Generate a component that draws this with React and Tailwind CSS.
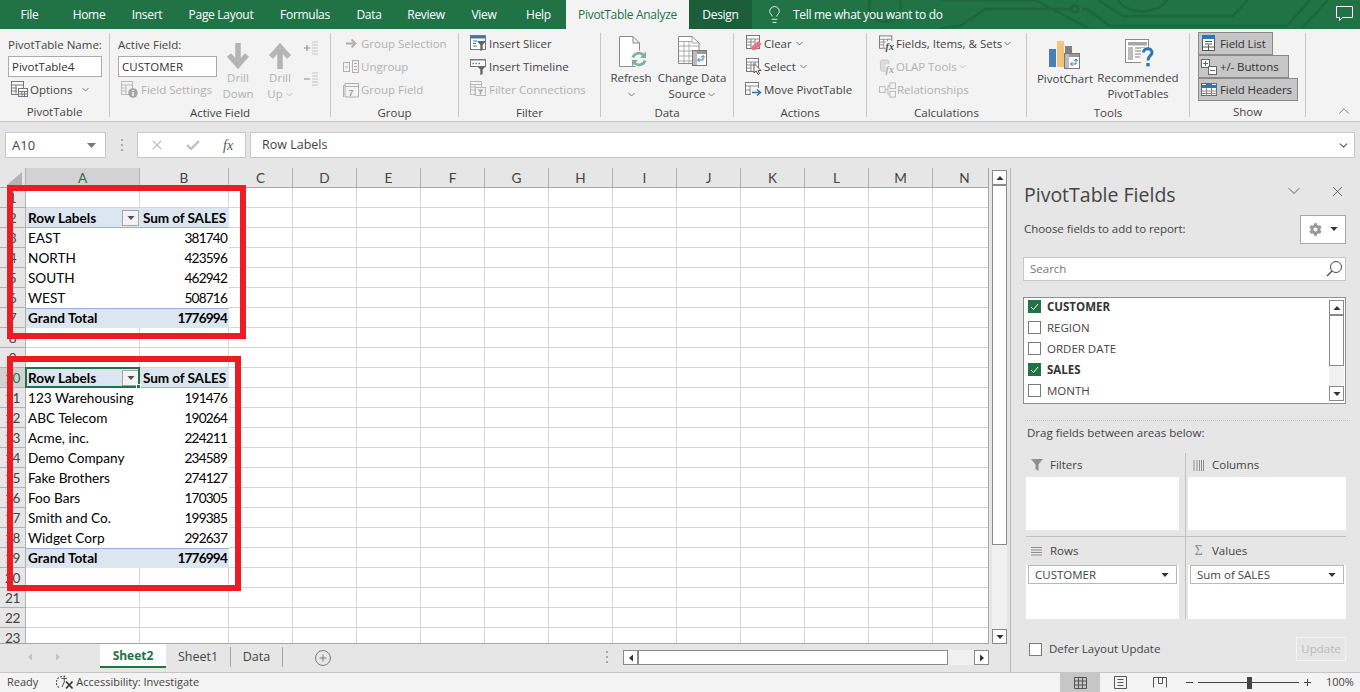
import { ChevronDown, ChevronUp, CirclePlus, Lightbulb, X } from 'lucide-react';
import { FaCog } from 'react-icons/fa';

const ui = "font-['Open_Sans','Noto_Sans',sans-serif]";
const cellFont = "font-['Lato','Liberation_Sans',sans-serif]";

const tabs = [
  ['File', 'w-[59px]'],
  ['Home', 'w-[60px]'],
  ['Insert', 'w-[56px]'],
  ['Page Layout', 'w-[92px]'],
  ['Formulas', 'w-[76px]'],
  ['Data', 'w-[52px]'],
  ['Review', 'w-[62px]'],
  ['View', 'w-[54px]'],
  ['Help', 'w-[55px]'],
];

function Caret({ className = '' }) {
  return (
    <svg width="7" height="5" viewBox="0 0 7 5" className={className}>
      <path d="M.5 1 3.5 4 6.5 1" fill="none" stroke="currentColor" />
    </svg>
  );
}

function Tri({ className = 'text-[#333]', w = 9, h = 5 }) {
  return (
    <svg width={w} height={h} viewBox="0 0 9 5" className={className}>
      <path d="M0 0H9L4.5 5Z" fill="currentColor" />
    </svg>
  );
}

function TableIcon({ c = '#777', small = '#777' }) {
  return (
    <svg width="17" height="17" viewBox="0 0 17 17">
      <rect x=".5" y=".5" width="12" height="13" fill="#fff" stroke={c} />
      <path d="M1 4H12M5 4V13M1 7H6M1 10H6" stroke={c} fill="none" />
      <rect x="7.5" y="7.5" width="9" height="8" fill="#fff" stroke={small} />
      <path d="M8 10.5H16M8 13H16M11 10V15M13.5 10V15" stroke={small} />
    </svg>
  );
}

function FieldSettingsIcon() {
  return (
    <svg width="17" height="17" viewBox="0 0 17 17">
      <rect x=".5" y=".5" width="11" height="13" fill="#f3f3f3" stroke="#bbb" />
      <path d="M1 4H11M5 4V13M1 7H5M1 10H5" stroke="#bbb" />
      <circle cx="12" cy="12" r="4.8" fill="#a6a6a6" />
      <path d="M12 11V15M12 9V10" stroke="#fff" strokeWidth="1.4" />
    </svg>
  );
}

function DrillDown() {
  return (
    <svg width="24" height="26" viewBox="0 0 24 26">
      <path d="M12 0V22M3 12 12 22 21 12" fill="none" stroke="#b4b4b4" strokeWidth="5.5" />
    </svg>
  );
}

function DrillUp() {
  return (
    <svg width="24" height="26" viewBox="0 0 24 26">
      <path d="M12 26V4M3 14 12 4 21 14" fill="none" stroke="#b4b4b4" strokeWidth="5.5" />
    </svg>
  );
}

function Expand({ minus }) {
  return (
    <svg width="16" height="15" viewBox="0 0 16 15">
      <path d="M9 1H15M9 4H15M9 7H15M9 10H15M9 13H15" stroke="#c4c4c4" />
      <path d={minus ? 'M1 7H7' : 'M1 7H7M4 4V10'} stroke="#a8a8a8" strokeWidth="1.4" />
    </svg>
  );
}

function GroupIcon({ kind }) {
  if (kind === 'sel') {
    return (
      <svg width="17" height="15" viewBox="0 0 17 15">
        <path d="M3 7.5H12M8.5 3.5 12.5 7.5 8.5 11.5" fill="none" stroke="#b0b0b0" strokeWidth="2" />
      </svg>
    );
  }
  if (kind === 'un') {
    return (
      <svg width="17" height="15" viewBox="0 0 17 15">
        <rect x=".5" y="3.5" width="6" height="9" fill="none" stroke="#b0b0b0" />
        <rect x="9.5" y="1.5" width="6" height="12" fill="none" stroke="#b0b0b0" />
        <path d="M11 4.5H14M11 7.5H14M11 10.5H14M2 8H5" stroke="#b0b0b0" />
      </svg>
    );
  }
  return (
    <svg width="17" height="16" viewBox="0 0 17 16">
      <path d="M.5 15V3.5H2M2 1.5H15.5V15H2Z" fill="none" stroke="#b0b0b0" />
      <path d="M2 4.5H15" stroke="#b0b0b0" />
      <text x="5.5" y="13.5" fontSize="9" fontWeight="700" fill="#a0a0a0" fontFamily="Liberation Sans">7</text>
    </svg>
  );
}

function SlicerIcon() {
  return (
    <svg width="17" height="17" viewBox="0 0 17 17">
      <rect x=".5" y=".5" width="15" height="14" fill="#fff" stroke="#777" />
      <rect x="1" y="1" width="14" height="2.5" fill="#3a77b4" />
      <path d="M3 6H7M3 8.5H6M3 11H7" stroke="#3a77b4" />
      <path d="M7 6H16L12.7 10V15L10.3 16V10Z" fill="#666" />
    </svg>
  );
}

function TimelineIcon() {
  return (
    <svg width="17" height="17" viewBox="0 0 17 17">
      <rect x=".5" y="1.5" width="15" height="7" fill="#fff" stroke="#777" />
      <rect x="1" y="1" width="14" height="1.5" fill="#777" />
      <path d="M2.5 5.5H4M5.5 5.5H7M8.5 5.5H10" stroke="#3a77b4" strokeWidth="1.5" />
      <path d="M7 8H16L12.7 11.5V16L10.3 17V11.5Z" fill="#666" />
    </svg>
  );
}

function FilterConnIcon() {
  return (
    <svg width="17" height="17" viewBox="0 0 17 17">
      <rect x=".5" y=".5" width="11" height="13" fill="none" stroke="#bbb" />
      <path d="M1 3.5H11M1 6H5M1 9H5M5 4V13" stroke="#bbb" />
      <rect x="5.5" y="6.5" width="10" height="8" fill="#f3f3f3" stroke="#bbb" />
      <path d="M7.5 8.5H13.5L11.2 11V13.5L9.8 13.5V11Z" fill="#a8a8a8" />
    </svg>
  );
}

function RefreshIcon() {
  return (
    <svg width="30" height="34" viewBox="0 0 30 34" className="ml-[4px]">
      <path d="M1.5 1.5H15L21.5 8V31.5H1.5ZM15 1.5V8H21.5" fill="#fff" stroke="#8a8a8a" />
      <circle cx="21" cy="24" r="8.5" fill="#f3f3f3" />
      <path d="M14.8 22.5A6.5 6.5 0 0 1 26 20.5M27.2 25.5A6.5 6.5 0 0 1 16 27.5" fill="none" stroke="#7fb09b" strokeWidth="2.6" />
      <path d="M28 16.5V23H22ZM14 31.5V25H20Z" fill="#7fb09b" />
    </svg>
  );
}

function ChangeSourceIcon() {
  return (
    <svg width="30" height="34" viewBox="0 0 30 34">
      <path d="M1.5 1.5H15L22 8V28.5H1.5Z" fill="#fff" stroke="#8a8a8a" />
      <path d="M15 1.5V8H22M2 6.5H15M2 11H22M2 16H15M2 21H15M2 26H15M7 6V28M12 6V28" fill="none" stroke="#aaa" />
      <rect x="15.5" y="15.5" width="14" height="15" fill="#fff" stroke="#777" />
      <rect x="16" y="16" width="13" height="3" fill="#999" />
      <rect x="16" y="16" width="4" height="14" fill="#bbb" />
      <path d="M26 21V25H21M22.5 23 20.5 25 22.5 27M24 22.5 26 20.5 28 22.5" fill="none" stroke="#2e75b6" />
    </svg>
  );
}

function ClearIcon() {
  return (
    <svg width="16" height="17" viewBox="0 0 16 17">
      <rect x=".5" y=".5" width="13" height="13" fill="#fff" stroke="#777" />
      <path d="M1 4H13M5 4V13M9 4V9M1 7H9M1 10H5" stroke="#888" />
      <path d="M9 8.5 12.5 6 15.5 9 10 15 6 15 5 12Z" fill="#e8748a" />
    </svg>
  );
}

function SelectIcon() {
  return (
    <svg width="16" height="17" viewBox="0 0 16 17">
      <rect x=".5" y=".5" width="12" height="13" fill="#fff" stroke="#777" />
      <path d="M1 4H12M5 4V13M9 4V8M1 7H8M1 10H5" stroke="#888" />
      <path d="M8 5.5V15L10.2 13 12 16.5 13.5 15.7 12 12.5H15Z" fill="#fff" stroke="#555" />
    </svg>
  );
}

function MoveIcon() {
  return (
    <svg width="17" height="16" viewBox="0 0 17 16">
      <rect x=".5" y=".5" width="13" height="12" fill="#fff" stroke="#777" />
      <path d="M1 4H13M5 4V12M1 8H5" stroke="#888" />
      <rect x="6" y="6" width="8" height="8" fill="#f3f3f3" />
      <path d="M7 10.5H15M12 7.5 15.5 10.5 12 13.5" fill="none" stroke="#2e75b6" strokeWidth="1.5" />
    </svg>
  );
}

function FxGrid({ disabled }) {
  const c = disabled ? '#bbb' : '#777';
  return (
    <svg width="18" height="17" viewBox="0 0 18 17">
      {disabled ? (
        <path d="M1.5 3C1.5 1 10.5 1 10.5 3V12C10.5 14 1.5 14 1.5 12Z" fill="#dcdcdc" stroke="#c8c8c8" />
      ) : (
        <>
          <rect x=".5" y=".5" width="13" height="13" fill="#fff" stroke={c} />
          <path d="M1 4H13M5 4V13M9 4V8M1 7H9M1 10H5" stroke="#888" />
        </>
      )}
      <rect x="7" y="6" width="11" height="11" fill="#f3f3f3" />
      <text x="7" y="15.5" fontSize="10.5" fontStyle="italic" fontFamily="Liberation Serif" fontWeight="700" fill={disabled ? '#aaa' : '#444'}>fx</text>
    </svg>
  );
}

function RelIcon() {
  return (
    <svg width="18" height="16" viewBox="0 0 18 16">
      <rect x=".5" y="4.5" width="6" height="6" fill="none" stroke="#b8b8b8" />
      <rect x="11.5" y=".5" width="6" height="6" fill="none" stroke="#b8b8b8" />
      <rect x="11.5" y="9.5" width="6" height="6" fill="none" stroke="#b8b8b8" />
      <path d="M7 7.5H9.5V3.5H11M9.5 7.5V12.5H11" fill="none" stroke="#b8b8b8" />
    </svg>
  );
}

function PivotChartIcon() {
  return (
    <svg width="32" height="30" viewBox="0 0 32 30">
      <rect x="0" y="9" width="7" height="18" fill="#4a7fb5" />
      <rect x="8" y="1" width="7" height="26" fill="#f0c67e" />
      <rect x="16" y="6" width="7" height="7" fill="#808080" />
      <rect x="15.5" y="13.5" width="15" height="15" fill="#fff" stroke="#777" />
      <rect x="16" y="14" width="14" height="3" fill="#999" />
      <rect x="16" y="14" width="4" height="14" fill="#bbb" />
      <path d="M27 19V24H22M23.5 22 21.5 24 23.5 26M25 21 27 19 29 21" fill="none" stroke="#2e75b6" />
    </svg>
  );
}

function RecommendedIcon() {
  return (
    <svg width="29" height="30" viewBox="0 0 29 30" className="ml-[3px]">
      <rect x=".5" y=".5" width="23" height="23" fill="#fff" stroke="#8a8a8a" />
      <rect x="3" y="3" width="19" height="3.5" fill="#a6a6a6" />
      <rect x="3" y="8" width="5" height="13" fill="#bcbcbc" />
      <path d="M10 9H20M10 12H20M10 15H16M10 18H15" stroke="#a6a6a6" strokeWidth="1.5" />
      <rect x="16" y="9" width="13" height="21" fill="#f3f3f3" />
      <path d="M18.5 13.5C18.5 8.5 27 8.5 27 13.5 27 17 23 16.5 23 21.5" fill="none" stroke="#2e75b6" strokeWidth="3" />
      <rect x="21.3" y="24" width="3.4" height="3.4" fill="#2e75b6" />
    </svg>
  );
}

function FieldListIcon() {
  return (
    <svg width="14" height="17" viewBox="0 0 14 17">
      <rect x=".5" y=".5" width="12" height="15" fill="#fff" stroke="#555" />
      <rect x="0" y="0" width="13" height="4" fill="#2e75b6" />
      <path d="M3 6.5H10M3 9H10M6.5 10V15M1 12H12" stroke="#555" />
    </svg>
  );
}

function PlusMinusIcon() {
  return (
    <svg width="16" height="16" viewBox="0 0 16 16">
      <rect x=".5" y=".5" width="8" height="8" fill="#fff" stroke="#666" />
      <path d="M2 4.5H7M4.5 2V7" stroke="#2e75b6" />
      <rect x="7.5" y="7.5" width="8" height="8" fill="#fff" stroke="#666" />
      <path d="M9 11.5H14" stroke="#2e75b6" />
    </svg>
  );
}

function HeadersIcon() {
  return (
    <svg width="16" height="14" viewBox="0 0 16 14">
      <rect x=".5" y=".5" width="15" height="12" fill="#fff" stroke="#666" />
      <rect x="0" y="2" width="16" height="3" fill="#2e75b6" />
      <rect x="5" y="0" width="6" height="2" fill="#2e75b6" />
      <path d="M0 8H16M0 10.5H16M5.5 5V13M10.5 5V13" stroke="#888" />
    </svg>
  );
}

function RibbonRow({ icon, label, off, caret, gap = 'gap-[3px]' }) {
  return (
    <div className={`flex h-[23px] items-center ${gap} whitespace-nowrap ${off ? 'text-[#b1b1b1]' : 'text-[#444]'}`}>
      <span className="flex w-[17px] shrink-0 justify-center">{icon}</span>
      <span>{label}</span>
      {caret && <Caret className="ml-[2px] opacity-70" />}
    </div>
  );
}

function BigButton({ icon, lines, caret, off, w }) {
  return (
    <div className={`flex flex-col items-center ${w} ${off ? 'text-[#b1b1b1]' : 'text-[#444]'}`}>
      <div className="flex h-[38px] items-end pb-[1px]">{icon}</div>
      <div className="text-center leading-[16px] whitespace-nowrap">
        {lines.map((l, i) => (
          <div key={l || i} className="flex h-[16px] items-center justify-center gap-[3px]">
            {l}
            {caret && i === lines.length - 1 && <Caret className="opacity-70" />}
          </div>
        ))}
      </div>
    </div>
  );
}

function Group({ label, w, children, className = '' }) {
  return (
    <div className={`relative mt-[4px] flex h-[84px] shrink-0 flex-col border-r border-[#c6c6c6] ${w}`}>
      <div className={`flex h-[69px] ${className}`}>{children}</div>
      <div className="h-[22px] text-center leading-[22px] text-[#444]">{label}</div>
    </div>
  );
}

function ShowButton({ icon, label, w }) {
  return (
    <div className={`flex h-[23px] items-center gap-[3px] border border-[#8a8a8a] bg-[#c6c6c6] pl-[2px] tracking-[-0.1px] whitespace-nowrap text-[#333] ${w}`}>
      <span className="flex w-[16px] justify-center">{icon}</span>
      {label}
    </div>
  );
}

function Ribbon() {
  return (
    <div className={`flex h-[93px] shrink-0 border-b border-[#c6c6c6] bg-[#f3f3f3] text-[11.5px] ${ui}`}>
      <Group label="PivotTable" w="w-[110px]" className="flex-col pl-[8px]">
        <div className="flex h-[23px] items-center whitespace-nowrap text-[#444]">PivotTable Name:</div>
        <div className="flex h-[21px] w-[94px] items-center border border-[#ababab] bg-white pl-[3px] text-[#333]">PivotTable4</div>
        <div className="mt-[1px] flex items-center pl-[3px] text-[#444]">
          <RibbonRow icon={<TableIcon />} label="Options" gap="gap-[2px]" />
          <Caret className="ml-[10px] opacity-70" />
        </div>
      </Group>
      <Group label="Active Field" w="w-[221px]" className="pl-[8px]">
        <div className="flex w-[100px] flex-col">
          <div className="flex h-[23px] items-center text-[#444]">Active Field:</div>
          <div className="flex h-[21px] w-[99px] items-center border border-[#ababab] bg-white pl-[3px] text-[#333]">CUSTOMER</div>
          <div className="mt-[1px] ml-[3px]"><RibbonRow off icon={<FieldSettingsIcon />} label="Field Settings" /></div>
        </div>
        <BigButton off w="w-[40px]" icon={<DrillDown />} lines={['Drill', 'Down']} />
        <BigButton off w="w-[44px]" icon={<DrillUp />} lines={['Drill', 'Up']} caret />
        <div className="ml-[1px] flex flex-col gap-[16px] pt-[8px]">
          <Expand />
          <Expand minus />
        </div>
      </Group>
      <Group label="Group" w="w-[128px]" className="-mt-[1px] mb-[1px] flex-col pl-[12px]">
        <RibbonRow off icon={<GroupIcon kind="sel" />} label="Group Selection" gap="gap-[1px]" />
        <RibbonRow off icon={<GroupIcon kind="un" />} label="Ungroup" gap="gap-[1px]" />
        <RibbonRow off icon={<GroupIcon kind="field" />} label="Group Field" gap="gap-[1px]" />
      </Group>
      <Group label="Filter" w="w-[142px]" className="-mt-[1px] mb-[1px] flex-col pl-[11px]">
        <RibbonRow icon={<SlicerIcon />} label="Insert Slicer" gap="gap-[2px]" />
        <RibbonRow icon={<TimelineIcon />} label="Insert Timeline" gap="gap-[2px]" />
        <RibbonRow off icon={<FilterConnIcon />} label="Filter Connections" gap="gap-[2px]" />
      </Group>
      <Group label="Data" w="w-[133px]" className="pl-[5px]">
        <BigButton w="w-[50px]" icon={<RefreshIcon />} lines={['Refresh', '']} caret />
        <BigButton w="w-[72px]" icon={<ChangeSourceIcon />} lines={['Change Data', 'Source']} caret />
      </Group>
      <Group label="Actions" w="w-[133px]" className="-mt-[1px] mb-[1px] flex-col pl-[11px]">
        <RibbonRow icon={<ClearIcon />} label="Clear" caret gap="gap-[2px]" />
        <RibbonRow icon={<SelectIcon />} label="Select" caret gap="gap-[2px]" />
        <RibbonRow icon={<MoveIcon />} label="Move PivotTable" gap="gap-[2px]" />
      </Group>
      <Group label="Calculations" w="w-[160px]" className="-mt-[1px] mb-[1px] flex-col pl-[12px]">
        <RibbonRow icon={<FxGrid />} label="Fields, Items, & Sets" caret gap="gap-[0px]" />
        <RibbonRow off icon={<FxGrid disabled />} label="OLAP Tools" caret gap="gap-[0px]" />
        <RibbonRow off icon={<RelIcon />} label="Relationships" gap="gap-[1px]" />
      </Group>
      <Group label="Tools" w="w-[163px]" className="pl-[7px]">
        <BigButton w="w-[62px]" icon={<PivotChartIcon />} lines={['PivotChart']} />
        <BigButton w="w-[84px]" icon={<RecommendedIcon />} lines={['Recommended', 'PivotTables']} />
      </Group>
      <Group label="Show" w="w-[116px]" className="flex-col pl-[8px]">
        <div className="-mt-[1px] flex flex-col">
          <ShowButton icon={<FieldListIcon />} label="Field List" w="w-[75px]" />
          <ShowButton icon={<PlusMinusIcon />} label="+/- Buttons" w="w-[91px]" />
          <ShowButton icon={<HeadersIcon />} label="Field Headers" w="w-[100px]" />
        </div>
      </Group>
      <div className="flex flex-1 items-end justify-center pb-[1px] pl-[22px]">
        <ChevronUp size={18} strokeWidth={1} className="text-[#555]" />
      </div>
    </div>
  );
}

function TabBar() {
  return (
    <div className={`relative flex h-[29px] shrink-0 items-stretch overflow-hidden bg-[#217346] text-[12px] tracking-[-0.3px] text-white ${ui}`}>
      <svg className="absolute top-0 right-0" width="520" height="29" viewBox="0 0 520 29" fill="none" stroke="#1c663e" strokeWidth="2.5">
        <path d="M100 28 120 26 145 9H232M242 9H247L270 26H447L470 0" />
        <path d="M100 0H195L248 28M258 0 283 16H393L408 0M278 0C286 15 318 15 327 0M462 28 488 0" />
        <circle cx="235" cy="9" r="3.5" />
        <circle cx="45" cy="6" r="16" />
      </svg>
      {tabs.map(([t, w]) => (
        <div key={t} className={`relative flex items-center justify-center ${w}`}>{t}</div>
      ))}
      <div className="relative flex w-[123px] items-center justify-center bg-[#f3f3f3] text-[#217346]">PivotTable Analyze</div>
      <div className="relative flex w-[63px] items-center justify-center bg-[#1b5e39]">Design</div>
      <div className="relative ml-[13px] flex items-center gap-[9px]">
        <Lightbulb size={19} strokeWidth={1.1} />
        <span>Tell me what you want to do</span>
      </div>
      <svg className="absolute top-[6px] right-[7px]" width="17" height="16" viewBox="0 0 17 16">
        <path d="M.5.5H16.5V11.5H6.5L3.5 14.5V11.5H.5Z" fill="none" stroke="#fff" />
      </svg>
    </div>
  );
}

function FormulaBar() {
  return (
    <div className={`flex h-[46px] shrink-0 items-start bg-[#e6e6e6] pt-[10px] pl-[5px] text-[#444] ${ui}`}>
      <div className="flex h-[26px] w-[101px] items-center justify-between border border-[#c6c6c6] bg-white pt-[1px] pr-[9px] pl-[6px] text-[13px]">
        A10
        <Tri className="text-[#777]" />
      </div>
      <div className="flex h-[26px] w-[31px] flex-col items-center justify-center gap-[3px]">
        <i className="h-[2px] w-[2px] bg-[#aaa]" />
        <i className="h-[2px] w-[2px] bg-[#aaa]" />
        <i className="h-[2px] w-[2px] bg-[#aaa]" />
      </div>
      <div className="flex h-[26px] w-[109px] items-center border border-[#c6c6c6] bg-white pl-[11px]">
        <X size={16} strokeWidth={1.6} className="text-[#bdbdbd]" />
        <svg className="ml-[21px]" width="14" height="12" viewBox="0 0 14 12">
          <path d="M1 6 5 10 13 2" fill="none" stroke="#bdbdbd" strokeWidth="2.2" />
        </svg>
        <span className="ml-[23px] font-['Liberation_Serif',serif] text-[14px] text-[#555] italic">fx</span>
      </div>
      <div className="ml-[4px] flex h-[26px] w-[1105px] items-center justify-between border border-[#c6c6c6] bg-white pt-[1px] pr-[4px] pl-[11px] text-[12.5px]">
        Row Labels
        <ChevronDown size={13} strokeWidth={2.4} className="text-[#666]" />
      </div>
    </div>
  );
}

const colNames = ['A', 'B', 'C', 'D', 'E', 'F', 'G', 'H', 'I', 'J', 'K', 'L', 'M', 'N'];
const colWidth = (i) => (i === 0 ? 'w-[114px]' : i === 1 ? 'w-[89px]' : 'w-[64px]');

const pivots = {
  2: ['Row Labels', 'Sum of SALES', 'head'],
  3: ['EAST', '381740'],
  4: ['NORTH', '423596'],
  5: ['SOUTH', '462942'],
  6: ['WEST', '508716'],
  7: ['Grand Total', '1776994', 'total'],
  10: ['Row Labels', 'Sum of SALES', 'head'],
  11: ['123 Warehousing', '191476'],
  12: ['ABC Telecom', '190264'],
  13: ['Acme, inc.', '224211'],
  14: ['Demo Company', '234589'],
  15: ['Fake Brothers', '274127'],
  16: ['Foo Bars', '170305'],
  17: ['Smith and Co.', '199385'],
  18: ['Widget Corp', '292637'],
  19: ['Grand Total', '1776994', 'total'],
};

function FilterBtn() {
  return (
    <span className="-mt-[1px] flex h-[16px] w-[17px] shrink-0 items-center justify-center border border-[#a6a6a6] bg-[#f3f3f3]">
      <Tri className="text-[#555]" w={8} h={4} />
    </span>
  );
}

function PivotCells({ row, data }) {
  const [a, b, kind] = data;
  const tone = kind === 'head'
    ? 'bg-[#dce6f1] border-b border-[#95b3d7] font-bold pt-[1px]'
    : kind === 'total'
      ? 'bg-[#dce6f1] border-t border-[#95b3d7] font-bold'
      : 'bg-white';
  const digits = kind === 'head' ? 'pr-[3px] tracking-[-0.1px]' : 'pr-[2px] tracking-[-0.8px]';
  return (
    <>
      <div className={`relative flex w-[114px] shrink-0 items-center justify-between pr-[1px] pl-[2px] whitespace-nowrap ${tone}`}>
        <span>{a}</span>
        {kind === 'head' && <FilterBtn />}
        {row === 10 && (
          <span className="absolute -top-[1px] -left-[1px] h-[21px] w-[115px] border-2 border-[#217346]">
            <i className="absolute -right-[3px] -bottom-[3px] h-[5px] w-[5px] border border-white bg-[#217346]" />
          </span>
        )}
      </div>
      <div className={`flex w-[89px] shrink-0 items-center justify-end whitespace-nowrap ${digits} ${tone}`}>{b}</div>
    </>
  );
}

function Sheet() {
  const rows = Array.from({ length: 23 }, (_, i) => i + 1);
  return (
    <div className={`h-[476px] w-[989px] shrink-0 overflow-hidden border-r border-b border-[#a6a6a6] bg-white text-[13.6px] text-black ${cellFont}`}>
      <div className="flex h-[20px] border-b border-[#a6a6a6] bg-[#e6e6e6] text-[#444]">
        <div className="relative w-[26px] shrink-0 border-r border-[#b1b1b1]">
          <svg className="absolute right-[3px] bottom-[2px]" width="15" height="13" viewBox="0 0 15 13">
            <path d="M15 0V13H0Z" fill="#b4b4b4" />
          </svg>
        </div>
        {colNames.map((c, i) => (
          <div
            key={c}
            className={`flex shrink-0 items-center justify-center border-r border-[#b1b1b1] pt-[1px] ${colWidth(i)} ${i === 0 ? 'bg-[#d2d2d2] text-[#217346]' : ''}`}
          >
            {c}
          </div>
        ))}
      </div>
      {rows.map((r) => {
        const p = pivots[r];
        return (
          <div key={r} className="flex h-[20px]">
            <div className={`flex w-[26px] shrink-0 items-center justify-center border-r border-b border-[#b1b1b1] pt-[1px] tracking-[-0.5px] ${r === 10 ? 'bg-[#d2d2d2] text-[#217346]' : 'bg-[#e6e6e6] text-[#444]'}`}>
              {r}
            </div>
            {p && <PivotCells row={r} data={p} />}
            {colNames.slice(p ? 2 : 0).map((c) => (
              <div key={c} className={`shrink-0 border-r border-b border-[#d4d4d4] ${colWidth(colNames.indexOf(c))}`} />
            ))}
          </div>
        );
      })}
    </div>
  );
}

function ScrollBtn({ dir }) {
  const rot = { up: 'rotate-180', down: '', left: 'rotate-90', right: '-rotate-90' }[dir];
  return (
    <div className="flex h-[15px] w-[15px] shrink-0 items-center justify-center border border-[#8a8a8a] bg-white">
      <Tri className={`text-[#333] ${rot}`} w={8} h={4} />
    </div>
  );
}

function VScroll() {
  return (
    <div className="flex h-[476px] w-[21px] flex-col items-center pt-[2px] pr-[3px] pl-[3px]">
      <ScrollBtn dir="up" />
      <div className="flex w-[15px] flex-1 flex-col bg-[#f0f0f0]">
        <div className="h-[360px] border border-[#8a8a8a] bg-white" />
      </div>
      <ScrollBtn dir="down" />
    </div>
  );
}

function SheetTabs() {
  return (
    <div className={`flex h-[28px] items-start bg-[#e6e6e6] text-[12.5px] text-[#444] ${ui}`}>
      <div className="flex w-[100px] shrink-0 items-center gap-[20px] pt-[11px] pl-[26px]">
        <Tri className="rotate-90 text-[#c4c4c4]" w={8} h={4} />
        <Tri className="-rotate-90 text-[#c4c4c4]" w={8} h={4} />
      </div>
      <div className="flex h-[24px] w-[66px] items-center justify-center border-b-2 border-[#217346] bg-white pt-[2px] text-[12px] font-bold text-[#217346]">Sheet2</div>
      <div className="mt-[3px] flex h-[20px] w-[65px] items-center justify-center border-r border-[#a6a6a6]">Sheet1</div>
      <div className="mt-[3px] flex h-[20px] w-[52px] items-center justify-center border-r border-[#a6a6a6]">Data</div>
      <div className="ml-[31px] flex h-[26px] items-center pt-[1px]">
        <CirclePlus size={18} strokeWidth={1.3} className="text-[#777]" />
      </div>
      <div className="ml-[266px] flex h-[26px] w-[17px] flex-col items-center justify-center gap-[3px]">
        <i className="h-[2px] w-[2px] bg-[#aaa]" />
        <i className="h-[2px] w-[2px] bg-[#aaa]" />
        <i className="h-[2px] w-[2px] bg-[#aaa]" />
      </div>
      <div className="mt-[6px] ml-[8px] flex">
        <ScrollBtn dir="left" />
        <div className="flex h-[15px] w-[336px] bg-[#f0f0f0]">
          <div className="h-[15px] w-[310px] border border-[#8a8a8a] bg-white" />
        </div>
        <ScrollBtn dir="right" />
      </div>
    </div>
  );
}

function CheckBox({ on }) {
  if (on) {
    return (
      <span className="flex h-[13px] w-[13px] shrink-0 items-center justify-center bg-[#217346]">
        <svg width="9" height="8" viewBox="0 0 9 8">
          <path d="M1 4 3.5 6.5 8 1" fill="none" stroke="#fff" />
        </svg>
      </span>
    );
  }
  return <span className="h-[13px] w-[13px] shrink-0 border border-[#7a7a7a] bg-white" />;
}

function AreaLabel({ icon, label }) {
  return (
    <div className="flex h-[24px] items-center gap-[7px] pl-[4px] text-[#444]">
      <span className="flex w-[13px] justify-center">{icon}</span>
      {label}
    </div>
  );
}

function FieldPill({ label }) {
  return (
    <div className="m-[2px] flex h-[19px] items-center justify-between border border-[#b8b8b8] bg-white pr-[7px] pl-[6px] text-[#444]">
      {label}
      <Tri className="text-[#333]" w={8} h={4} />
    </div>
  );
}

function FieldsPanel() {
  const fields = [['CUSTOMER', true], ['REGION'], ['ORDER DATE'], ['SALES', true], ['MONTH']];
  return (
    <div className={`relative h-[504px] w-[350px] shrink-0 border-l border-[#b8b8b8] bg-[#e6e6e6] text-[11.5px] text-[#444] ${ui}`}>
      <div className="flex h-[42px] items-center justify-between pt-[12px] pr-[14px] pl-[13px]">
        <span className="text-[19.5px] leading-none">PivotTable Fields</span>
        <div className="flex items-center gap-[25px] pb-[8px]">
          <ChevronDown size={20} strokeWidth={1} />
          <X size={17} strokeWidth={1.1} />
        </div>
      </div>
      <div className="flex h-[34px] items-center justify-between pt-[4px] pr-[14px] pl-[13px]">
        <span className="tracking-[-0.05px]">Choose fields to add to report:</span>
        <div className="flex h-[29px] w-[46px] items-center justify-center gap-[8px] border border-[#a6a6a6] bg-white">
          <FaCog size={13} className="text-[#999]" />
          <Tri className="text-[#333]" w={8} h={4} />
        </div>
      </div>
      <div className="mt-[13px] ml-[12px] flex h-[24px] w-[323px] items-center justify-between border border-[#c6c6c6] bg-white pr-[2px] pl-[6px] text-[#777]">
        <span className="-mt-[1px]">Search</span>
        <svg width="18" height="18" viewBox="0 0 18 18">
          <circle cx="11" cy="7" r="5.5" fill="none" stroke="#444" />
          <path d="M7 11 2 16" stroke="#444" strokeWidth="1.3" />
        </svg>
      </div>
      <div className="mt-[16px] ml-[12px] flex h-[107px] w-[323px] border border-[#8f8f8f] bg-white">
        <div className="-mt-[2px] flex-1">
          {fields.map(([f, on]) => (
            <div key={f} className={`flex h-[21px] items-center gap-[6px] pl-[4px] ${on ? 'font-bold text-[#333]' : ''}`}>
              <CheckBox on={on} />
              {f}
            </div>
          ))}
        </div>
        <div className="mt-[2px] mr-[1px] mb-[2px] flex w-[15px] flex-col bg-[#f0f0f0]">
          <ScrollBtn dir="up" />
          <div className="h-[51px] border border-[#8a8a8a] bg-white" />
          <div className="flex-1" />
          <ScrollBtn dir="down" />
        </div>
      </div>
      <div className="mt-[16px] ml-[14px] w-[325px] border-t border-dotted border-[#c0c0c0]" />
      <div className="mt-[4px] ml-[16px] flex h-[16px] items-center">Drag fields between areas below:</div>
      <div className="mt-[12px] ml-[15px] grid w-[320px] grid-cols-[160px_160px]">
        <div className="border-r border-b border-[#c0c0c0] pr-[6px] pb-[6px]">
          <AreaLabel label="Filters" icon={
            <svg width="12" height="12" viewBox="0 0 12 12"><path d="M0 0H12L7.5 5.5V12L4.5 10V5.5Z" fill="#8f8f8f" /></svg>
          } />
          <div className="h-[53px] bg-white" />
        </div>
        <div className="border-b border-[#c0c0c0] pb-[6px] pl-[2px]">
          <AreaLabel label="Columns" icon={
            <svg width="11" height="11" viewBox="0 0 11 11"><path d="M1 0V11M4 0V11M6.5 0V11M8.5 0V11M10.5 0V11" stroke="#8f8f8f" /></svg>
          } />
          <div className="h-[53px] bg-white" />
        </div>
        <div className="border-r border-[#c0c0c0] pt-[2px] pr-[6px]">
          <AreaLabel label="Rows" icon={
            <svg width="11" height="9" viewBox="0 0 11 9"><path d="M0 .5H11M0 3H11M0 5.5H11M0 8H11" stroke="#8f8f8f" /></svg>
          } />
          <div className="h-[54px] bg-white"><FieldPill label="CUSTOMER" /></div>
        </div>
        <div className="pt-[2px] pl-[2px]">
          <AreaLabel label="Values" icon={<span className="font-['Liberation_Serif',serif] text-[14px] leading-none text-[#8f8f8f]">Σ</span>} />
          <div className="h-[54px] bg-white"><FieldPill label="Sum of SALES" /></div>
        </div>
      </div>
      <div className="mt-[18px] ml-[18px] flex w-[317px] items-center justify-between">
        <div className="flex items-center gap-[7px]">
          <CheckBox />
          <span>Defer Layout Update</span>
        </div>
        <div className="flex h-[24px] w-[50px] items-center justify-center border border-[#f3f3f3] text-[#b9b9b9]">Update</div>
      </div>
    </div>
  );
}

function StatusBar() {
  return (
    <div className={`flex h-[20px] shrink-0 items-center border-t border-[#c6c6c6] bg-[#f3f3f3] pl-[7px] text-[11px] text-[#444] ${ui}`}>
      <span>Ready</span>
      <svg className="ml-[18px]" width="18" height="15" viewBox="0 0 18 15">
        <path d="M6 1.5A6 6 0 0 0 3 12.5" fill="none" stroke="#555" strokeWidth="1.2" strokeDasharray="2 1.2" />
        <path d="M5.5 3.5H11M8.3 3.5V7L6 12" fill="none" stroke="#555" />
        <circle cx="8.3" cy="1.5" r="1" fill="#555" />
        <path d="M10 6.5 16.5 13.5M16.5 6.5 10 13.5" stroke="#333" strokeWidth="1.7" />
      </svg>
      <span className="ml-[2px]">Accessibility: Investigate</span>
      <div className="ml-auto flex w-[300px] items-center">
        <div className="flex h-[19px] w-[40px] items-center justify-center bg-[#c6c6c6]">
          <svg width="13" height="12" viewBox="0 0 13 12">
            <path d="M.5.5H12.5V11.5H.5ZM4.5.5V11.5M8.5.5V11.5M.5 4H12.5M.5 8H12.5" fill="none" stroke="#555" />
          </svg>
        </div>
        <div className="flex h-[19px] w-[40px] items-center justify-center">
          <svg width="13" height="13" viewBox="0 0 13 13">
            <path d="M.5.5H12.5V12.5H.5ZM3.5 3.5H9.5M3.5 6.5H9.5M3.5 9.5H9.5" fill="none" stroke="#555" />
          </svg>
        </div>
        <div className="flex h-[19px] w-[40px] items-center justify-center">
          <svg width="14" height="12" viewBox="0 0 14 12">
            <path d="M.5 10.5V.5H13.5V10.5M5.5.5V6.5H9.5V.5" fill="none" stroke="#555" />
          </svg>
        </div>
        <div className="ml-[6px] flex items-center gap-[5px]">
          <i className="h-[1px] w-[7px] bg-[#444]" />
          <div className="flex h-[11px] w-[101px] items-center justify-center bg-[linear-gradient(#0000_45%,#444_45%,#444_55%,#0000_55%)]">
            <i className="ml-[2px] h-[12px] w-[5px] bg-[#444]" />
          </div>
          <span className="relative h-[7px] w-[7px] before:absolute before:top-[3px] before:left-0 before:h-[1px] before:w-[7px] before:bg-[#444] after:absolute after:top-0 after:left-[3px] after:h-[7px] after:w-[1px] after:bg-[#444]" />
        </div>
        <span className="ml-[15px]">100%</span>
      </div>
    </div>
  );
}

export default function App() {
  return (
    <div className="relative flex h-[692px] w-[1360px] flex-col overflow-hidden bg-[#e6e6e6]">
      <TabBar />
      <Ribbon />
      <FormulaBar />
      <div className="flex h-[504px] shrink-0">
        <div className="w-[1010px] shrink-0">
          <div className="flex">
            <Sheet />
            <VScroll />
          </div>
          <SheetTabs />
        </div>
        <FieldsPanel />
      </div>
      <StatusBar />
      {/* red boxes someone drew on top of the screenshot */}
      <div className="absolute top-[185px] left-[7px] h-[154px] w-[239px] border-[6px] border-[#ed1c24]" />
      <div className="absolute top-[356px] left-[7px] h-[235px] w-[234px] border-[6px] border-[#ed1c24]" />
    </div>
  );
}
